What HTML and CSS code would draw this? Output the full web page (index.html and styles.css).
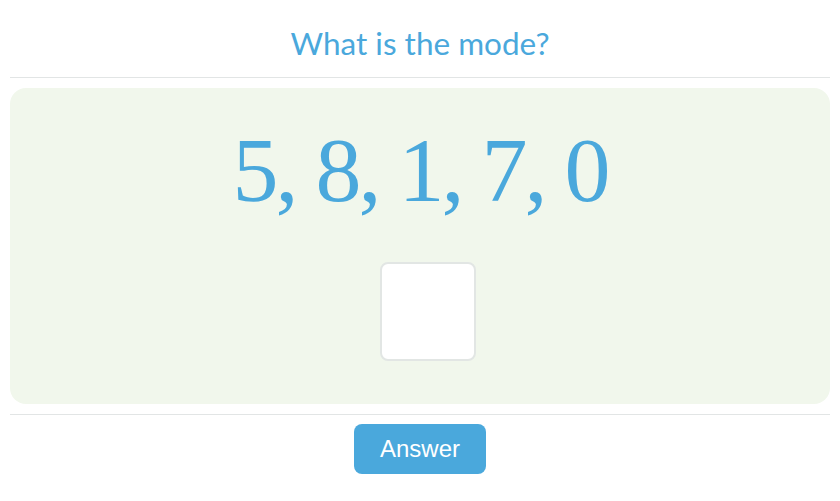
FILE: index.html
```html
<!DOCTYPE html>
<html>
<head>
<meta charset="utf-8">
<link rel="stylesheet" href="styles.css">
</head>
<body>
<div class="page">
  <h1 class="title">What is the mode?</h1>
  <div class="rule"></div>
  <div class="panel">
    <div class="numbers">5, 8, 1, 7, 0</div>
    <div class="answer-box"></div>
  </div>
  <div class="rule rule-bottom"></div>
  <div class="actions">
    <button class="answer-btn">Answer</button>
  </div>
</div>
</body>
</html>
```
FILE: styles.css
```css
html, body {
  margin: 0;
  padding: 0;
  background: #ffffff;
}
.page {
  width: 820px;
  margin: 0 auto;
  display: flex;
  flex-direction: column;
}
.title {
  margin: 0;
  height: 77px;
  box-sizing: border-box;
  padding-top: 8px;
  display: flex;
  align-items: center;
  justify-content: center;
  font-family: Lato, "Open Sans", sans-serif;
  font-weight: 400;
  font-size: 31.5px;
  color: #4aa8dc;
}
.rule {
  height: 1px;
  background: #e2e5e5;
}
.panel {
  margin-top: 10px;
  height: 316px;
  background: #f1f7ec;
  border-radius: 16px;
  display: flex;
  flex-direction: column;
  align-items: center;
}
.numbers {
  margin-top: 36px;
  font-family: "Liberation Serif", "Times New Roman", serif;
  font-size: 92px;
  line-height: 92px;
  color: #4aa8dc;
  letter-spacing: -3px;
}
.answer-box {
  margin-top: 46px;
  margin-left: 16px;
  width: 92px;
  height: 95px;
  background: #ffffff;
  border: 2px solid #e2e6e4;
  border-radius: 8px;
}
.rule-bottom {
  margin-top: 10px;
}
.actions {
  display: flex;
  justify-content: center;
  padding-top: 9px;
}
.answer-btn {
  width: 132px;
  height: 50px;
  border: none;
  border-radius: 8px;
  background: #4aa8dc;
  color: #ffffff;
  font-family: "Liberation Sans", Arial, sans-serif;
  font-size: 24px;
  padding: 0;
}
```
